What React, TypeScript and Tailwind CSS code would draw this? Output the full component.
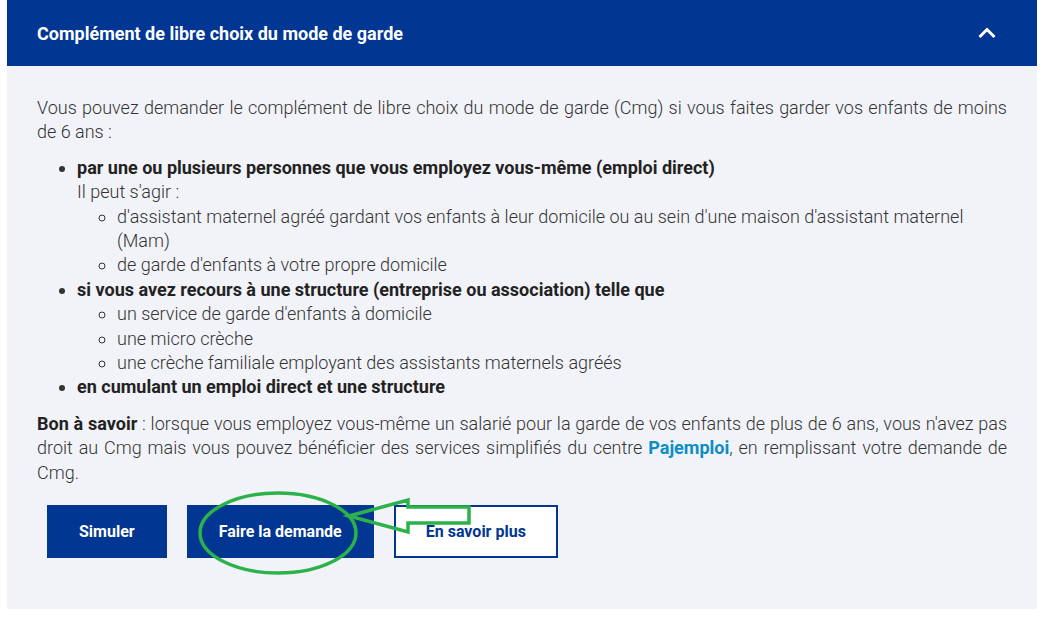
import React from "react";

const sans = "font-['Roboto','Liberation_Sans',sans-serif]";

function Chevron() {
  return (
    <svg width="20" height="14" viewBox="0 0 20 14" className="block">
      <polyline points="2.5,11 10,3.5 17.5,11" fill="none" stroke="white" strokeWidth="3" />
    </svg>
  );
}

function Annotation() {
  // hand drawn green marks over the screenshot
  return (
    <svg
      width="1045"
      height="621"
      viewBox="0 0 1045 621"
      className="pointer-events-none absolute left-0 top-0"
    >
      <ellipse cx="278" cy="533" rx="78" ry="40" fill="none" stroke="#2cb24a" strokeWidth="3.5" />
      <polygon
        points="349,516 408,500 408,507 469,507 469,523 408,523 408,532"
        fill="none"
        stroke="#2cb24a"
        strokeWidth="3.5"
        strokeLinejoin="miter"
      />
    </svg>
  );
}

export default function App() {
  return (
    <div className={`relative h-[621px] w-[1045px] bg-white ${sans}`}>
      <section className="ml-[7px] w-[1030px]">
        <header className="flex h-[66px] items-center justify-between bg-[#013693] pl-[30px] pr-[40px]">
          <h2 className="text-[18px] font-bold text-white">Complément de libre choix du mode de garde</h2>
          <Chevron />
        </header>

        <div className="bg-[#f2f3f8] px-[30px] pb-[51px] pt-[30px] text-[18px] font-light leading-[24.4px] text-[#333]">
          <p className="mb-[11px] text-justify">
            Vous pouvez demander le complément de libre choix du mode de garde (Cmg) si vous faites garder vos
            enfants de moins de 6 ans :
          </p>
          <ul className="mb-[12px] list-disc pl-10">
            <li>
              <strong className="font-bold text-[#222]">
                par une ou plusieurs personnes que vous employez vous-même (emploi direct)
              </strong>
              <br />
              Il peut s'agir :
              <ul className="list-[circle] pl-10">
                <li>
                  d'assistant maternel agréé gardant vos enfants à leur domicile ou au sein d'une maison
                  d'assistant maternel (Mam)
                </li>
                <li>de garde d'enfants à votre propre domicile</li>
              </ul>
            </li>
            <li>
              <strong className="font-bold text-[#222]">
                si vous avez recours à une structure (entreprise ou association) telle que
              </strong>
              <ul className="list-[circle] pl-10">
                <li>un service de garde d'enfants à domicile</li>
                <li>une micro crèche</li>
                <li>une crèche familiale employant des assistants maternels agréés</li>
              </ul>
            </li>
            <li>
              <strong className="font-bold text-[#222]">en cumulant un emploi direct et une structure</strong>
            </li>
          </ul>
          <p className="text-justify">
            <strong className="font-bold text-[#222]">Bon à savoir</strong> : lorsque vous employez vous-même un
            salarié pour la garde de vos enfants de plus de 6 ans, vous n'avez pas droit au Cmg mais vous pouvez
            bénéficier des services simplifiés du centre{" "}
            <a className="font-bold text-[#0b8ec4]">Pajemploi</a>, en remplissant votre demande de Cmg.
          </p>

          <div className="ml-[10px] mt-[20px] flex gap-5 leading-none">
            <button className="h-[53px] border-2 border-[#013693] bg-[#013693] px-[30px] text-[16px] font-bold text-white">
              Simuler
            </button>
            <button className="h-[53px] border-2 border-[#013693] bg-[#013693] px-[30px] text-[16px] font-bold text-white">
              Faire la demande
            </button>
            <button className="h-[53px] border-2 border-[#013693] bg-white px-[30px] text-[16px] font-bold text-[#013693]">
              En savoir plus
            </button>
          </div>
        </div>
      </section>
      <Annotation />
    </div>
  );
}
